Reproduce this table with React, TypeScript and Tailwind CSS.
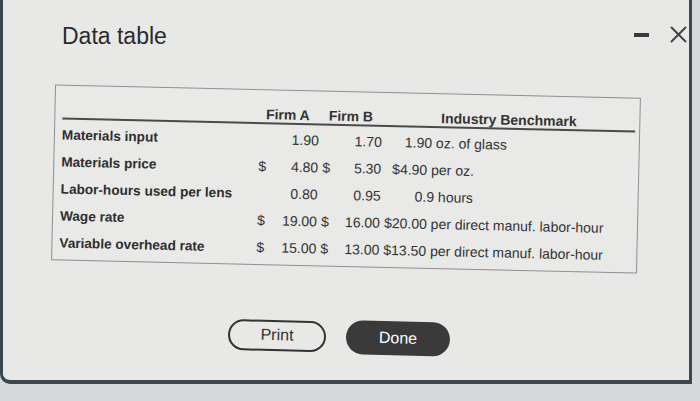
type Row = {
  label: string;
  dollarA: string;
  a: string;
  dollarB: string;
  b: string;
  bench: string;
  benchPad: string;
};

const rows: Row[] = [
  { label: 'Materials input', dollarA: '', a: '1.90', dollarB: '', b: '1.70', bench: '1.90 oz. of glass', benchPad: 'pl-[23px]' },
  { label: 'Materials price', dollarA: '$', a: '4.80', dollarB: '$', b: '5.30', bench: '$4.90 per oz.', benchPad: 'pl-[11px]' },
  { label: 'Labor-hours used per lens', dollarA: '', a: '0.80', dollarB: '', b: '0.95', bench: '0.9 hours', benchPad: 'pl-[34px]' },
  { label: 'Wage rate', dollarA: '$', a: '19.00', dollarB: '$', b: '16.00', bench: '$20.00 per direct manuf. labor-hour', benchPad: 'pl-[4px]' },
  { label: 'Variable overhead rate', dollarA: '$', a: '15.00', dollarB: '$', b: '13.00', bench: '$13.50 per direct manuf. labor-hour', benchPad: 'pl-[4px]' },
];

const cols = 'grid grid-cols-[194px_15px_48px_16px_47px_1fr]';

const CloseIcon = () => (
  <svg width="17" height="17" viewBox="0 0 17 17" fill="none" stroke="#444" strokeWidth="2" strokeLinecap="round">
    <path d="M1.5 1.5l14 14M15.5 1.5l-14 14" />
  </svg>
);

const DataTable = () => (
  <div className="ml-[50px] w-[586px] border border-[#8d8f91] bg-[#e9e9e7] pl-[7px] pr-[4px] pb-[3px] rotate-[1.3deg]">
    <div className={`${cols} border-b-2 border-[#4a4a4a] pt-[16px] text-[14px] font-bold leading-[16px] text-[#333]`}>
      <div />
      <div className="col-span-2 text-center">Firm A</div>
      <div className="col-span-2 text-center">Firm B</div>
      <div className="text-center">Industry Benchmark</div>
    </div>
    <div className="mt-[2px]">
      {rows.map((r) => (
        <div key={r.label} className={`${cols} h-[27px] items-center text-[14px] leading-[27px] text-[#333]`}>
          <div className="text-[13.6px] font-bold text-[#2e2e2e]">{r.label}</div>
          <div className="pl-[3px]">{r.dollarA}</div>
          <div className="text-right">{r.a}</div>
          <div className="pl-[4px]">{r.dollarB}</div>
          <div className="text-right">{r.b}</div>
          <div className={`${r.benchPad} whitespace-nowrap`}>{r.bench}</div>
        </div>
      ))}
    </div>
  </div>
);

export default function App() {
  return (
    <div className="w-[700px] h-[401px] overflow-hidden bg-[#d5d9dc] font-['Liberation_Sans',Arial,sans-serif]">
      <div className="w-[692px] h-[384px] rounded-bl-[10px] border-l-[3px] border-r-[3px] border-b-[4px] border-[#3b4852] bg-[#e8e8e6]">
        <div className="flex items-start justify-between pt-[25px] pl-[59px] pr-[2px]">
          <h1 className="text-[23px] leading-[23px] text-[#2b2b2b]">Data table</h1>
          <div className="flex items-center gap-[21px] pt-[1px]">
            <div className="w-[15px] h-[4px] bg-[#3a3a3a]" />
            <CloseIcon />
          </div>
        </div>
        <div className="mt-[43px]">
          <DataTable />
        </div>
        <div className="mt-[53px] flex items-center gap-[20px] pl-[225px] rotate-[1.5deg]">
          <button className="w-[98px] h-[31px] rounded-full border-2 border-[#333] text-[16px] text-[#333]">
            Print
          </button>
          <button className="w-[104px] h-[34px] rounded-full bg-[#3a3a3a] text-[16px] text-white">
            Done
          </button>
        </div>
      </div>
    </div>
  );
}
